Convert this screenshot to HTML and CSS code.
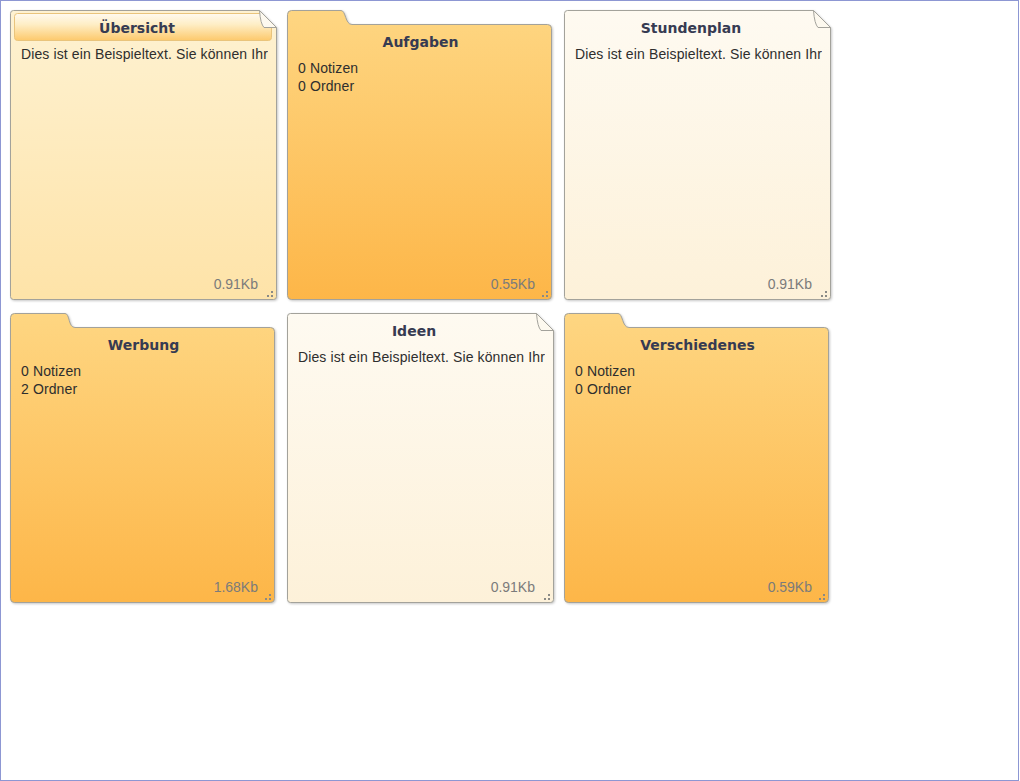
FILE: index.html
```html
<!DOCTYPE html>
<html lang="de">
<head>
<meta charset="utf-8">
<title>Notizen</title>
<link rel="stylesheet" href="styles.css">
</head>
<body>
<svg class="defs" width="0" height="0" aria-hidden="true">
  <defs>
    <linearGradient id="gSel" x1="0" y1="0" x2="0" y2="1">
      <stop offset="0" stop-color="#fef2d2"/>
      <stop offset="1" stop-color="#fee3a8"/>
    </linearGradient>
    <linearGradient id="gNote" x1="0" y1="0" x2="0" y2="1">
      <stop offset="0" stop-color="#fefaf1"/>
      <stop offset="1" stop-color="#fdf1d9"/>
    </linearGradient>
    <linearGradient id="gFolder" x1="0" y1="0" x2="0" y2="1">
      <stop offset="0" stop-color="#fed682"/>
      <stop offset="1" stop-color="#fdb648"/>
    </linearGradient>
    <linearGradient id="gBar" x1="0" y1="0" x2="0" y2="1">
      <stop offset="0" stop-color="#fffaf0"/>
      <stop offset="0.4" stop-color="#feeec6"/>
      <stop offset="1" stop-color="#fdc96c"/>
    </linearGradient>
    <clipPath id="clipNote">
      <path d="M3.5,0.5 H249.5 L266.5,17.5 V286.5 Q266.5,289.5 263.5,289.5 H3.5 Q0.5,289.5 0.5,286.5 V3.5 Q0.5,0.5 3.5,0.5 Z"/>
    </clipPath>
  </defs>
</svg>

<main class="board">
  <section class="card note selected">
    <svg class="shape" width="267" height="290" viewBox="0 0 267 290">
      <path class="outline" fill="url(#gSel)" d="M3.5,0.5 H249.5 L266.5,17.5 V286.5 Q266.5,289.5 263.5,289.5 H3.5 Q0.5,289.5 0.5,286.5 V3.5 Q0.5,0.5 3.5,0.5 Z"/>
      <rect class="bar" clip-path="url(#clipNote)" x="4.5" y="3.5" width="257" height="27" rx="3" fill="url(#gBar)"/>
      <path class="fold" d="M249.5,0.5 Q250.5,14 254,17.5 H266.5 Z"/>
    </svg>
    <h2 class="title">Übersicht</h2>
    <p class="text">Dies ist ein Beispieltext. Sie können Ihr</p>
    <div class="size">0.91Kb</div>
    <svg class="grip" width="8" height="8" viewBox="0 0 8 8"><rect x="5" y="1" width="2" height="2"/><rect x="1" y="5" width="2" height="2"/><rect x="5" y="5" width="2" height="2"/></svg>
  </section>

  <section class="card folder">
    <svg class="shape" width="265" height="290" viewBox="0 0 265 290">
      <path class="outline" fill="url(#gFolder)" d="M0.5,4.5 Q0.5,0.5 4.5,0.5 H54 C59,0.5 58,14.5 65,14.5 H260.5 Q264.5,14.5 264.5,18.5 V285.5 Q264.5,289.5 260.5,289.5 H4.5 Q0.5,289.5 0.5,285.5 Z"/>
    </svg>
    <h2 class="title">Aufgaben</h2>
    <p class="text">0 Notizen<br>0 Ordner</p>
    <div class="size">0.55Kb</div>
    <svg class="grip" width="8" height="8" viewBox="0 0 8 8"><rect x="5" y="1" width="2" height="2"/><rect x="1" y="5" width="2" height="2"/><rect x="5" y="5" width="2" height="2"/></svg>
  </section>

  <section class="card note">
    <svg class="shape" width="267" height="290" viewBox="0 0 267 290">
      <path class="outline" fill="url(#gNote)" d="M3.5,0.5 H249.5 L266.5,17.5 V286.5 Q266.5,289.5 263.5,289.5 H3.5 Q0.5,289.5 0.5,286.5 V3.5 Q0.5,0.5 3.5,0.5 Z"/>
      <path class="fold" d="M249.5,0.5 Q250.5,14 254,17.5 H266.5 Z"/>
    </svg>
    <h2 class="title">Stundenplan</h2>
    <p class="text">Dies ist ein Beispieltext. Sie können Ihr</p>
    <div class="size">0.91Kb</div>
    <svg class="grip" width="8" height="8" viewBox="0 0 8 8"><rect x="5" y="1" width="2" height="2"/><rect x="1" y="5" width="2" height="2"/><rect x="5" y="5" width="2" height="2"/></svg>
  </section>

  <section class="card folder">
    <svg class="shape" width="265" height="290" viewBox="0 0 265 290">
      <path class="outline" fill="url(#gFolder)" d="M0.5,4.5 Q0.5,0.5 4.5,0.5 H55 C60,0.5 58,14.5 65,14.5 H260.5 Q264.5,14.5 264.5,18.5 V285.5 Q264.5,289.5 260.5,289.5 H4.5 Q0.5,289.5 0.5,285.5 Z"/>
    </svg>
    <h2 class="title">Werbung</h2>
    <p class="text">0 Notizen<br>2 Ordner</p>
    <div class="size">1.68Kb</div>
    <svg class="grip" width="8" height="8" viewBox="0 0 8 8"><rect x="5" y="1" width="2" height="2"/><rect x="1" y="5" width="2" height="2"/><rect x="5" y="5" width="2" height="2"/></svg>
  </section>

  <section class="card note">
    <svg class="shape" width="267" height="290" viewBox="0 0 267 290">
      <path class="outline" fill="url(#gNote)" d="M3.5,0.5 H249.5 L266.5,17.5 V286.5 Q266.5,289.5 263.5,289.5 H3.5 Q0.5,289.5 0.5,286.5 V3.5 Q0.5,0.5 3.5,0.5 Z"/>
      <path class="fold" d="M249.5,0.5 Q250.5,14 254,17.5 H266.5 Z"/>
    </svg>
    <h2 class="title">Ideen</h2>
    <p class="text">Dies ist ein Beispieltext. Sie können Ihr</p>
    <div class="size">0.91Kb</div>
    <svg class="grip" width="8" height="8" viewBox="0 0 8 8"><rect x="5" y="1" width="2" height="2"/><rect x="1" y="5" width="2" height="2"/><rect x="5" y="5" width="2" height="2"/></svg>
  </section>

  <section class="card folder">
    <svg class="shape" width="265" height="290" viewBox="0 0 265 290">
      <path class="outline" fill="url(#gFolder)" d="M0.5,4.5 Q0.5,0.5 4.5,0.5 H54 C59,0.5 58,14.5 65,14.5 H260.5 Q264.5,14.5 264.5,18.5 V285.5 Q264.5,289.5 260.5,289.5 H4.5 Q0.5,289.5 0.5,285.5 Z"/>
    </svg>
    <h2 class="title">Verschiedenes</h2>
    <p class="text">0 Notizen<br>0 Ordner</p>
    <div class="size">0.59Kb</div>
    <svg class="grip" width="8" height="8" viewBox="0 0 8 8"><rect x="5" y="1" width="2" height="2"/><rect x="1" y="5" width="2" height="2"/><rect x="5" y="5" width="2" height="2"/></svg>
  </section>
</main>
</body>
</html>
```
FILE: styles.css
```css
html {
  margin: 0;
  padding: 0;
  background: #ffffff;
}

body {
  margin: 0;
  width: 1019px;
  height: 781px;
  box-sizing: border-box;
  border: 1px solid #8d97d3;
  padding: 9px;
  background: #ffffff;
  font-family: "Liberation Sans", Arial, sans-serif;
  overflow: hidden;
}

.defs {
  position: absolute;
  width: 0;
  height: 0;
}

.board {
  display: grid;
  grid-template-columns: 267px 267px 266px;
  grid-auto-rows: 290px;
  column-gap: 10px;
  row-gap: 13px;
}

.card {
  position: relative;
  height: 290px;
  display: flex;
  flex-direction: column;
  box-sizing: border-box;
}

.card.note {
  width: 267px;
  padding: 8px 10px 7px 11px;
}

.card.folder {
  width: 265px;
  padding: 22px 9px 7px 11px;
}

.shape {
  position: absolute;
  left: 0;
  top: 0;
  z-index: 0;
  filter: drop-shadow(1px 1px 1px rgba(0, 0, 0, 0.22));
}

.outline {
  stroke: #a3a29b;
  stroke-width: 1;
}

.bar {
  stroke: #e9c47c;
  stroke-width: 1;
}

.fold {
  fill: #fdf9ef;
  stroke: #a3a29b;
  stroke-width: 1;
  stroke-linejoin: round;
}

.title {
  position: relative;
  margin: 0;
  font-family: "DejaVu Sans", Verdana, sans-serif;
  font-weight: bold;
  font-size: 14px;
  line-height: 20px;
  color: #363b52;
  text-align: center;
}

.note .title {
  padding-right: 14px;
}

.text {
  position: relative;
  margin: 7px 0 0 0;
  font-size: 14px;
  line-height: 18px;
  letter-spacing: 0.12px;
  color: #2e2e2e;
  white-space: nowrap;
  overflow: hidden;
}

.note .text {
  margin-right: -1px;
}

.size {
  position: relative;
  margin-top: auto;
  font-size: 14px;
  line-height: 18px;
  color: #7b7b7b;
  text-align: right;
}

.note .size {
  padding-right: 9px;
}

.folder .size {
  padding-right: 8px;
}

.grip {
  position: absolute;
  right: 3px;
  bottom: 2px;
  fill: #8a8a86;
}
```
